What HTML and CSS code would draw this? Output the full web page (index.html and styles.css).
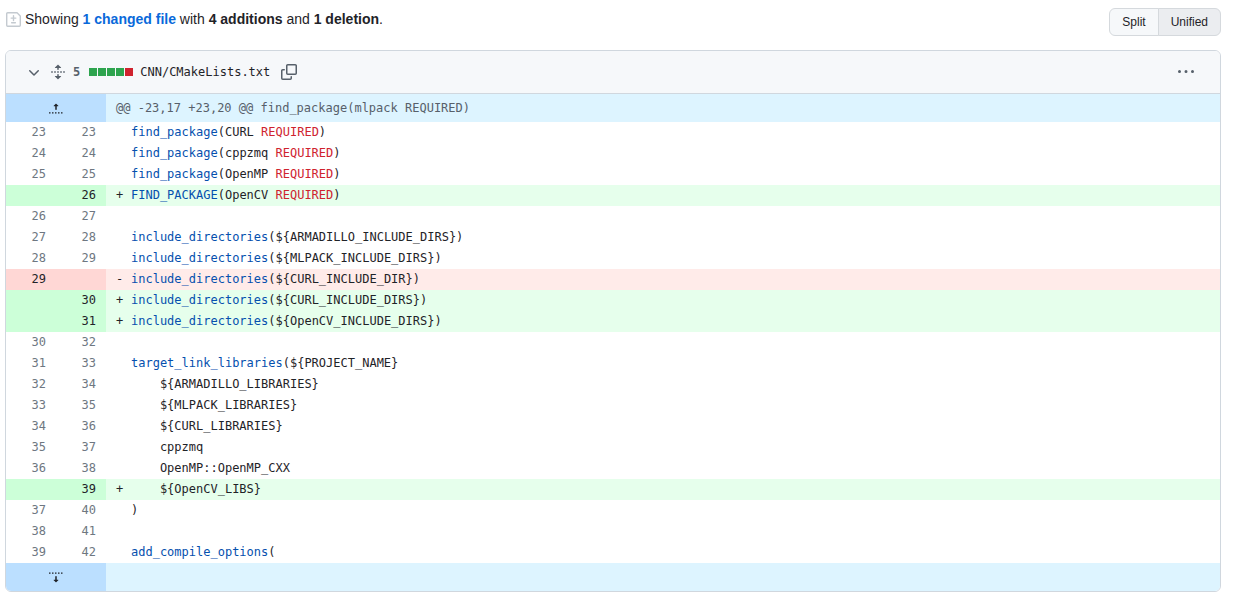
FILE: index.html
```html
<!DOCTYPE html>
<html lang="en">

<head>
    <meta charset="UTF-8" />
    <title>CNN/CMakeLists.txt diff</title>
    <link rel="stylesheet" href="styles.css">
</head>

<body>
    <div class="toc-bar">
        <div class="summary">
            <svg class="file-diff-icon" width="15" height="15" viewBox="0 0 16 16">
                <path d="M1.75 1.5a.25.25 0 0 0-.25.25v12.5c0 .14.11.25.25.25h12.5a.25.25 0 0 0 .25-.25V4.66a.25.25 0 0 0-.07-.18L11.52 1.57a.25.25 0 0 0-.18-.07H1.75ZM0 1.75C0 .78.78 0 1.75 0h9.59c.46 0 .9.18 1.23.51l2.92 2.92c.33.33.51.77.51 1.23v9.59A1.75 1.75 0 0 1 14.25 16H1.75A1.75 1.75 0 0 1 0 14.25V1.75Z" />
                <path d="M8 3.25a.75.75 0 0 1 .75.75v1.75h1.75a.75.75 0 0 1 0 1.5H8.75V9a.75.75 0 0 1-1.5 0V7.25H5.5a.75.75 0 0 1 0-1.5h1.75V4A.75.75 0 0 1 8 3.25ZM5.25 11.5a.75.75 0 0 1 .75-.75h4a.75.75 0 0 1 0 1.5H6a.75.75 0 0 1-.75-.75Z" />
            </svg>
            <span>Showing <a class="link" href="#">1 changed file</a> with <strong>4 additions</strong> and <strong>1 deletion</strong>.</span>
        </div>
        <div class="btn-group">
            <button class="btn">Split</button>
            <button class="btn btn-selected">Unified</button>
        </div>
    </div>

    <div class="file">
        <div class="file-header">
            <svg class="chevron" width="16" height="16" viewBox="0 0 16 16">
                <path d="M12.78 5.22a.75.75 0 0 1 0 1.06l-4.25 4.25a.75.75 0 0 1-1.06 0L3.22 6.28a.75.75 0 1 1 1.06-1.06L8 8.94l3.72-3.72a.75.75 0 0 1 1.06 0Z" />
            </svg>
            <svg class="expand-all" width="16" height="16" viewBox="0 0 16 16">
                <path d="m8.177.677 2.896 2.896a.25.25 0 0 1-.177.427H8.75v1.25a.75.75 0 0 1-1.5 0V4H5.104a.25.25 0 0 1-.177-.427L7.823.677a.25.25 0 0 1 .354 0ZM7.25 10.75a.75.75 0 0 1 1.5 0V12h2.146a.25.25 0 0 1 .177.427l-2.896 2.896a.25.25 0 0 1-.354 0l-2.896-2.896A.25.25 0 0 1 5.104 12H7.25v-1.25Zm-5-2a.75.75 0 0 0 0-1.5h-.5a.75.75 0 0 0 0 1.5h.5ZM6 8a.75.75 0 0 1-.75.75h-.5a.75.75 0 0 1 0-1.5h.5A.75.75 0 0 1 6 8Zm2.25.75a.75.75 0 0 0 0-1.5h-.5a.75.75 0 0 0 0 1.5h.5ZM12 8a.75.75 0 0 1-.75.75h-.5a.75.75 0 0 1 0-1.5h.5A.75.75 0 0 1 12 8Zm2.25.75a.75.75 0 0 0 0-1.5h-.5a.75.75 0 0 0 0 1.5h.5Z" />
            </svg>
            <span class="diffstat-num">5</span>
            <span class="diffstat">
                <i class="add"></i><i class="add"></i><i class="add"></i><i class="add"></i><i class="del"></i>
            </span>
            <a class="file-name" href="#">CNN/CMakeLists.txt</a>
            <svg class="copy" width="16" height="16" viewBox="0 0 16 16">
                <path d="M0 6.75C0 5.784.784 5 1.75 5h1.5a.75.75 0 0 1 0 1.5h-1.5a.25.25 0 0 0-.25.25v7.5c0 .138.112.25.25.25h7.5a.25.25 0 0 0 .25-.25v-1.5a.75.75 0 0 1 1.5 0v1.5A1.75 1.75 0 0 1 9.25 16h-7.5A1.75 1.75 0 0 1 0 14.25Z" />
                <path d="M5 1.75C5 .784 5.784 0 6.75 0h7.5C15.216 0 16 .784 16 1.75v7.5A1.75 1.75 0 0 1 14.25 11h-7.5A1.75 1.75 0 0 1 5 9.25Zm1.75-.25a.25.25 0 0 0-.25.25v7.5c0 .138.112.25.25.25h7.5a.25.25 0 0 0 .25-.25v-7.5a.25.25 0 0 0-.25-.25Z" />
            </svg>
            <svg class="kebab" width="16" height="16" viewBox="0 0 16 16">
                <path d="M8 9a1.5 1.5 0 1 0 0-3 1.5 1.5 0 0 0 0 3ZM1.5 9a1.5 1.5 0 1 0 0-3 1.5 1.5 0 0 0 0 3Zm13 0a1.5 1.5 0 1 0 0-3 1.5 1.5 0 0 0 0 3Z" />
            </svg>
        </div>

        <table class="diff">
            <tr class="hunk">
                <td class="expander" colspan="2">
                    <svg width="16" height="16" viewBox="0 0 16 16">
                        <path d="M8.177 3.677l2.146 2.146a.25.25 0 0 1-.177.427H8.75v3a.75.75 0 0 1-1.5 0v-3H5.854a.25.25 0 0 1-.177-.427l2.146-2.146a.25.25 0 0 1 .354 0ZM1 12.25h1.5v1.25H1Zm3 0h1.5v1.25H4Zm3 0h1.5v1.25H7Zm3 0h1.5v1.25H10Zm3 0h1.5v1.25H13Z" />
                    </svg>
                </td>
                <td class="code hunk-text">@@ -23,17 +23,20 @@ find_package(mlpack REQUIRED)</td>
            </tr>
            <tr>
                <td class="num">23</td><td class="num">23</td>
                <td class="code"><span class="marker"></span><span class="fn">find_package</span>(CURL <span class="kw">REQUIRED</span>)</td>
            </tr>
            <tr>
                <td class="num">24</td><td class="num">24</td>
                <td class="code"><span class="marker"></span><span class="fn">find_package</span>(cppzmq <span class="kw">REQUIRED</span>)</td>
            </tr>
            <tr>
                <td class="num">25</td><td class="num">25</td>
                <td class="code"><span class="marker"></span><span class="fn">find_package</span>(OpenMP <span class="kw">REQUIRED</span>)</td>
            </tr>
            <tr class="added">
                <td class="num"></td><td class="num">26</td>
                <td class="code"><span class="marker">+</span><span class="fn">FIND_PACKAGE</span>(OpenCV <span class="kw">REQUIRED</span>)</td>
            </tr>
            <tr>
                <td class="num">26</td><td class="num">27</td>
                <td class="code"></td>
            </tr>
            <tr>
                <td class="num">27</td><td class="num">28</td>
                <td class="code"><span class="marker"></span><span class="fn">include_directories</span>(${ARMADILLO_INCLUDE_DIRS})</td>
            </tr>
            <tr>
                <td class="num">28</td><td class="num">29</td>
                <td class="code"><span class="marker"></span><span class="fn">include_directories</span>(${MLPACK_INCLUDE_DIRS})</td>
            </tr>
            <tr class="removed">
                <td class="num">29</td><td class="num"></td>
                <td class="code"><span class="marker">-</span><span class="fn">include_directories</span>(${CURL_INCLUDE_DIR})</td>
            </tr>
            <tr class="added">
                <td class="num"></td><td class="num">30</td>
                <td class="code"><span class="marker">+</span><span class="fn">include_directories</span>(${CURL_INCLUDE_DIRS})</td>
            </tr>
            <tr class="added">
                <td class="num"></td><td class="num">31</td>
                <td class="code"><span class="marker">+</span><span class="fn">include_directories</span>(${OpenCV_INCLUDE_DIRS})</td>
            </tr>
            <tr>
                <td class="num">30</td><td class="num">32</td>
                <td class="code"></td>
            </tr>
            <tr>
                <td class="num">31</td><td class="num">33</td>
                <td class="code"><span class="marker"></span><span class="fn">target_link_libraries</span>(${PROJECT_NAME}</td>
            </tr>
            <tr>
                <td class="num">32</td><td class="num">34</td>
                <td class="code"><span class="marker"></span>    ${ARMADILLO_LIBRARIES}</td>
            </tr>
            <tr>
                <td class="num">33</td><td class="num">35</td>
                <td class="code"><span class="marker"></span>    ${MLPACK_LIBRARIES}</td>
            </tr>
            <tr>
                <td class="num">34</td><td class="num">36</td>
                <td class="code"><span class="marker"></span>    ${CURL_LIBRARIES}</td>
            </tr>
            <tr>
                <td class="num">35</td><td class="num">37</td>
                <td class="code"><span class="marker"></span>    cppzmq</td>
            </tr>
            <tr>
                <td class="num">36</td><td class="num">38</td>
                <td class="code"><span class="marker"></span>    OpenMP::OpenMP_CXX</td>
            </tr>
            <tr class="added">
                <td class="num"></td><td class="num">39</td>
                <td class="code"><span class="marker">+</span>    ${OpenCV_LIBS}</td>
            </tr>
            <tr>
                <td class="num">37</td><td class="num">40</td>
                <td class="code"><span class="marker"></span>)</td>
            </tr>
            <tr>
                <td class="num">38</td><td class="num">41</td>
                <td class="code"></td>
            </tr>
            <tr>
                <td class="num">39</td><td class="num">42</td>
                <td class="code"><span class="marker"></span><span class="fn">add_compile_options</span>(</td>
            </tr>
            <tr class="hunk">
                <td class="expander expander-down" colspan="2">
                    <svg width="16" height="16" viewBox="0 0 16 16">
                        <path d="M1 2.5h1.5v1.25H1Zm3 0h1.5v1.25H4Zm3 0h1.5v1.25H7Zm3 0h1.5v1.25H10Zm3 0h1.5v1.25H13ZM8.177 12.323l2.146-2.146a.25.25 0 0 0-.177-.427H8.75v-3a.75.75 0 0 0-1.5 0v3H5.854a.25.25 0 0 0-.177.427l2.146 2.146a.25.25 0 0 0 .354 0Z" />
                    </svg>
                </td>
                <td class="code hunk-text"></td>
            </tr>
        </table>
    </div>
</body>

</html>
```

FILE: styles.css
```css
:root {
    --border-color: #d0d7de;
    --text-color: #1f2328;
    --muted-color: #57606a;
    --num-color: #6e7781;
    --link-color: #0969da;
    --mono: 'DejaVu Sans Mono', monospace;
}

* {
    box-sizing: border-box;
}

body {
    margin: 0;
    padding: 8px 13px 0 5px;
    background-color: #ffffff;
    color: var(--text-color);
    font-family: 'Liberation Sans', sans-serif;
    font-size: 14px;
}

a {
    text-decoration: none;
}

.toc-bar {
    display: flex;
    justify-content: space-between;
    align-items: flex-start;
    height: 42px;
    padding-left: 1px;
}

.summary {
    display: flex;
    align-items: center;
    gap: 4px;
    height: 22px;
    color: var(--text-color);
}

.file-diff-icon {
    fill: #c4cad0;
}

.summary .link {
    color: var(--link-color);
    font-weight: bold;
}

.btn-group {
    display: flex;
}

.btn {
    height: 28px;
    padding: 0 12px;
    border: 1px solid #d5d9dd;
    background-color: #f6f8fa;
    color: var(--text-color);
    font-family: inherit;
    font-size: 12px;
}

.btn:first-child {
    border-radius: 6px 0 0 6px;
}

.btn:last-child {
    margin-left: -1px;
    border-radius: 0 6px 6px 0;
}

.btn-selected {
    background-color: #ebedf0;
}

.file {
    width: 1216px;
    border: 1px solid var(--border-color);
    border-radius: 6px;
    overflow: hidden;
}

.file-header {
    display: flex;
    align-items: center;
    height: 43px;
    padding-left: 20px;
    padding-right: 26px;
    background-color: #f6f8fa;
    border-bottom: 1px solid var(--border-color);
}

.file-header svg {
    fill: var(--muted-color);
}

.chevron {
    margin-top: 2px;
}

.expand-all {
    margin-left: 8px;
}

.diffstat-num {
    margin-left: 7px;
    font-family: var(--mono);
    font-size: 12px;
    font-weight: bold;
    color: var(--muted-color);
}

.diffstat {
    display: flex;
    gap: 1px;
    margin-left: 9px;
}

.diffstat i {
    width: 8px;
    height: 8px;
}

.diffstat .add {
    background-color: #2da44e;
}

.diffstat .del {
    background-color: #cf222e;
}

.file-name {
    margin-left: 7px;
    font-family: var(--mono);
    font-size: 12px;
    color: var(--text-color);
}

.copy {
    margin-left: 11px;
}

.kebab {
    margin-left: auto;
}

.diff {
    width: 100%;
    border-collapse: collapse;
    table-layout: fixed;
    font-family: var(--mono);
    font-size: 12px;
}

.diff td {
    height: 21px;
    padding: 0;
    line-height: 20px;
    vertical-align: top;
}

.num {
    width: 50px;
    padding-right: 10px !important;
    text-align: right;
    color: var(--num-color);
}

.code {
    padding-left: 10px !important;
    white-space: pre;
    color: var(--text-color);
}

.marker {
    display: inline-block;
    width: 15px;
}

.fn {
    color: #0550ae;
}

.kw {
    color: #cf222e;
}

.hunk .expander {
    width: 100px;
    height: 28px;
    padding-top: 6px;
    background-color: #bbdfff;
    text-align: center;
}

.hunk .expander-down {
    padding-top: 7px;
}

.expander svg {
    display: block;
    margin: 0 auto;
    fill: #1f2328;
}

.diff .hunk-text {
    vertical-align: middle;
    background-color: #ddf4ff;
    color: var(--muted-color);
}

.added .num {
    background-color: #ccffd8;
    color: var(--text-color);
}

.added .code {
    background-color: #e6ffec;
}

.removed .num {
    background-color: #ffd7d5;
    color: var(--text-color);
}

.removed .code {
    background-color: #ffebe9;
}
```
